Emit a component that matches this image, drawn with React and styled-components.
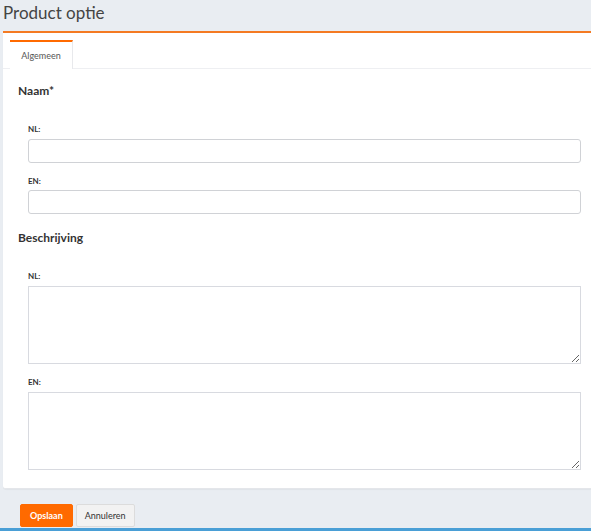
import React from "react";
import styled, { createGlobalStyle } from "styled-components";

const Global = createGlobalStyle`
  html, body { margin: 0; padding: 0; }
  body {
    background: #e9edf2;
    font-family: Lato, "Open Sans", sans-serif;
    color: #333;
  }
  * { box-sizing: border-box; }
`;

const Page = styled.div`
  width: 591px;
  height: 531px;
  display: flex;
  flex-direction: column;
  background: #e9edf2;
  border-bottom: 3px solid #4a9fd6;
  overflow: hidden;
`;

const Title = styled.h1`
  margin: 0;
  height: 31px;
  padding: 2px 0 0 3px;
  font-size: 17px;
  font-weight: 400;
  color: #444;
  line-height: 22px;
`;

const Panel = styled.div`
  margin-left: 3px;
  background: #fff;
  border-top: 2px solid #f47a22;
  border-bottom: 1px solid #e4e6ea;
  border-bottom-left-radius: 3px;
  box-shadow: 0 1px 1px rgba(0, 0, 0, 0.04);
  padding-bottom: 18px;
  display: flex;
  flex-direction: column;
`;

const Tabs = styled.div`
  display: flex;
  margin-top: 7px;
  padding-left: 7px;
  border-bottom: 1px solid #eeeff2;
  height: 29px;
`;

const Tab = styled.div`
  width: 63px;
  height: 29px;
  border-top: 2px solid #ff6a00;
  border-right: 1px solid #e8e9ec;
  margin-bottom: -1px;
  background: #fff;
  font-size: 9px;
  color: #555;
  display: flex;
  align-items: center;
  justify-content: center;
  padding-bottom: 1px;
`;

const Body = styled.div`
  padding: 14px 10px 0 15px;
  display: flex;
  flex-direction: column;
`;

const SectionTitle = styled.div`
  font-size: 12px;
  font-weight: 700;
  color: #333;
  line-height: 16px;
  margin-bottom: ${(p) => p.$gap}px;
`;

const Field = styled.div`
  padding-left: 10px;
  display: flex;
  flex-direction: column;
`;

const Label = styled.label`
  font-size: 8px;
  font-weight: 700;
  color: #333;
  line-height: 10px;
  margin-bottom: ${(p) => p.$mb ?? 5}px;
`;

const Input = styled.input`
  width: 553px;
  height: 24px;
  border: 1px solid #d0d2d6;
  border-radius: 3px;
  background: #fff;
  margin: 0 0 ${(p) => p.$mb}px 0;
  outline: none;
`;

const TextArea = styled.textarea`
  width: 553px;
  height: 78px;
  border: 1px solid #d8dae0;
  border-radius: 0;
  background: #fff;
  margin: 0 0 ${(p) => p.$mb}px 0;
  outline: none;
  display: block;
`;

const Actions = styled.div`
  display: flex;
  gap: 3px;
  padding: 15px 0 0 20px;
`;

const Button = styled.button`
  height: 23px;
  padding: 0 ${(p) => (p.$primary ? 9 : 8)}px;
  font-family: Lato, "Open Sans", sans-serif;
  font-size: 9px;
  font-weight: ${(p) => (p.$primary ? 700 : 400)};
  color: ${(p) => (p.$primary ? "#fff" : "#333")};
  background: ${(p) => (p.$primary ? "#ff6a00" : "#f2f2f2")};
  border: 1px solid ${(p) => (p.$primary ? "#ff6a00" : "#dcdcdc")};
  border-radius: 2px;
  cursor: pointer;
`;

export default function App() {
  return (
    <>
      <Global />
      <Page>
        <Title>Product optie</Title>
        <Panel>
          <Tabs>
            <Tab>Algemeen</Tab>
          </Tabs>
          <Body>
            <SectionTitle $gap={25}>Naam*</SectionTitle>
            <Field>
              <Label>NL:</Label>
              <Input $mb={13} />
              <Label $mb={4}>EN:</Label>
              <Input $mb={16} />
            </Field>
            <SectionTitle $gap={25}>Beschrijving</SectionTitle>
            <Field>
              <Label>NL:</Label>
              <TextArea $mb={13} />
              <Label $mb={5}>EN:</Label>
              <TextArea $mb={0} />
            </Field>
          </Body>
        </Panel>
        <Actions>
          <Button $primary>Opslaan</Button>
          <Button>Annuleren</Button>
        </Actions>
      </Page>
    </>
  );
}
